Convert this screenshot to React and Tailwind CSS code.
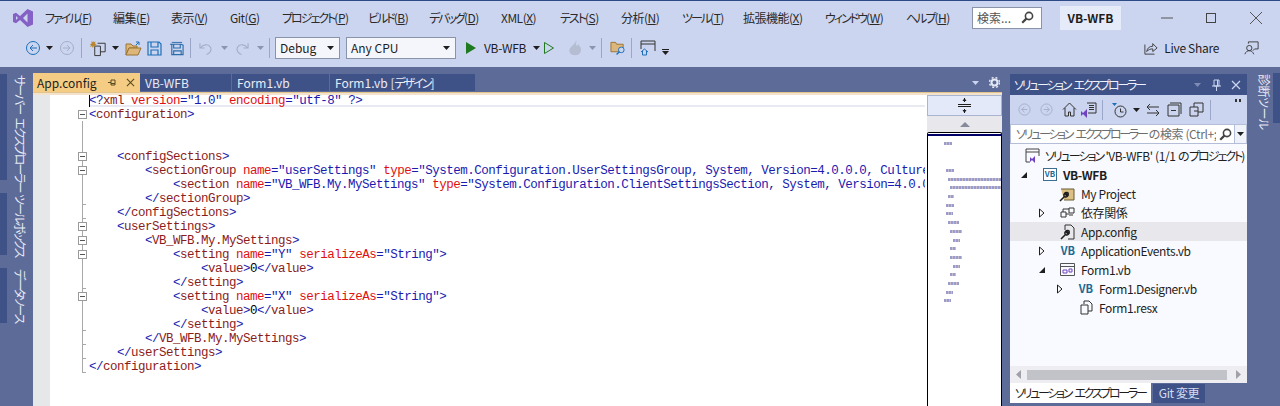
const menus = [
  ['ファイル', 'F', 'w-[68px]', true], ['編集', 'E', 'w-[58px]'], ['表示', 'V', 'w-[59px]'], ['Git', 'G', 'w-[52px]'],
  ['プロジェクト', 'P', 'w-[86px]', true], ['ビルド', 'B', 'w-[61px]', true], ['デバッグ', 'D', 'w-[72px]', true], ['XML', 'X', 'w-[59px]'],
  ['テスト', 'S', 'w-[61px]', true], ['分析', 'N', 'w-[61px]'], ['ツール', 'T', 'w-[61px]', true], ['拡張機能', 'X', 'w-[82px]'],
  ['ウィンドウ', 'W', 'w-[81px]', true], ['ヘルプ', 'H', 'w-[66px]', true],
];

const code = [
  '<?xml version="1.0" encoding="utf-8" ?>',
  '<configuration>',
  '',
  '',
  '    <configSections>',
  '        <sectionGroup name="userSettings" type="System.Configuration.UserSettingsGroup, System, Version=4.0.0.0, Culture=neutral',
  '            <section name="VB_WFB.My.MySettings" type="System.Configuration.ClientSettingsSection, System, Version=4.0.0.0, Culture',
  '        </sectionGroup>',
  '    </configSections>',
  '    <userSettings>',
  '        <VB_WFB.My.MySettings>',
  '            <setting name="Y" serializeAs="String">',
  '                <value>0</value>',
  '            </setting>',
  '            <setting name="X" serializeAs="String">',
  '                <value>0</value>',
  '            </setting>',
  '        </VB_WFB.My.MySettings>',
  '    </userSettings>',
  '</configuration>',
];

// rows with a collapse box, and rows that close a block with a tick
const boxes = [1, 4, 5, 9, 10, 11, 14];
const ticks = [7, 8, 13, 16, 17, 18, 19];

// minimap rows: left offset inside the frame, width, gap above
const mini = [
  [16, 8, 6], [18, 8, 24], [20, 54, 5.7], [22, 52, 5.7], [20, 6, 5.7], [18, 8, 5.7], [18, 7, 5.7], [20, 11, 5.7], [22, 12, 5.7],
  [25, 7, 5.7], [22, 6, 5.7], [22, 12, 5.7], [25, 7, 5.7], [22, 6, 5.7], [20, 11, 5.7], [18, 7, 5.7], [16, 7, 5.7],
];

function tokenize(line) {
  const parts = line.match(/"[^"]*"?|<\/?\??|\??>|=|\s+|[^\s<>="?]+/g) || [];
  let inTag = false;
  let first = false;
  return parts.map((p) => {
    if (p[0] === '<') { inTag = true; first = true; return [p, 'text-[#1a1ab0]']; }
    if (p.endsWith('>')) { inTag = false; return [p, 'text-[#1a1ab0]']; }
    if (p === '=' || p[0] === '"') return [p, 'text-[#1a1ab0]'];
    if (!p.trim()) return [p, ''];
    if (inTag && first) { first = false; return [p, 'text-[#8b1c1c]']; }
    if (inTag) return [p, 'text-[#e01010]'];
    return [p, 'text-black'];
  });
}

// katakana runs are set narrow, like the UI font of the picture
function K({ children }) {
  return <span className="tracking-[-2px]">{children}</span>;
}

function ExplorerName() {
  return <span className="tracking-[-2.3px] [word-spacing:3px]">ソリューション エクスプローラー</span>;
}

function Tri({ open }) {
  return open ? (
    <svg width="8" height="8" viewBox="0 0 8 8"><path d="M1 7h6V1z" fill="#1e1e1e" /></svg>
  ) : (
    <svg width="8" height="10" viewBox="0 0 8 10"><path d="M1.5 1v8l4.5-4z" fill="#fff" stroke="#1e1e1e" /></svg>
  );
}

function Caret({ c = '#1e1e1e' }) {
  return <svg width="7" height="4" viewBox="0 0 7 4"><path d="M0 0h7L3.5 4z" fill={c} /></svg>;
}

function Sep({ className = '' }) {
  return <div className={`w-px h-[20px] bg-[#9aa7c8] ${className}`} />;
}

function SideTab({ label, h, mt }) {
  return (
    <div className={`${h} ${mt} flex`}>
      <div className="w-[7px] bg-[#3f5288]" />
      <div className="w-[26px] flex items-center pt-[1px] text-[#e6eaf5] text-[12px] tracking-[-2px] [word-spacing:4px] [writing-mode:vertical-rl] [text-orientation:sideways] whitespace-nowrap">
        {label}
      </div>
    </div>
  );
}

function Tab({ children, w }) {
  return (
    <div className={`${w} h-[17px] bg-[#3f5288] text-[#e8ecf7] text-[12px] leading-[17px] pl-[5px] whitespace-nowrap overflow-hidden`}>
      {children}
    </div>
  );
}

function VbIcon() {
  return <span className="text-[11px] font-bold text-[#1c6a94] leading-none tracking-normal">VB</span>;
}

function TreeRow({ pad, tri, icon, label, active, bold }) {
  return (
    <div className={`h-[19px] flex items-center whitespace-nowrap ${pad} ${active ? 'bg-[#e8e8ec]' : ''}`}>
      <div className="w-[18px] flex justify-center shrink-0">{tri}</div>
      <div className="w-[30px] h-[16px] flex items-center justify-end pr-[6px] shrink-0">{icon}</div>
      <span className={bold ? 'font-bold' : ''}>{label}</span>
    </div>
  );
}

const wrench = <path d="M1 15l5-5M5 10a2.6 2.6 0 013-3.4L6.4 8.2l1.2 1.2L9.2 7.8A2.6 2.6 0 015.8 10.8" fill="none" stroke="#1e1e1e" strokeWidth="1.5" />;

export default function App() {
  return (
    <div className="w-[1280px] h-[406px] overflow-hidden flex flex-col bg-[#5d6b99] font-['Noto_Sans_CJK_JP','Noto_Sans',sans-serif] [font-feature-settings:'palt'] text-[#1e1e1e]">
      {/* Title + menu */}
      <div className="h-[67px] bg-[#ccd5f0] border-t border-[#2d4a86] shrink-0 flex flex-col">
        <div className="h-[33px] flex items-center">
          <div className="w-[45px] pl-[13px] shrink-0">
            <svg width="20" height="18" viewBox="0 0 20 18">
              <path d="M14.5 0L20 2.5v13L14.5 18 7 11l-4 3.2L0 13V5l3-1.2L7 7zM3 7v4l2-2zm11.5-2.5L10 9l4.5 4.5z" fill="#8661c5" fillRule="evenodd" />
            </svg>
          </div>
          <div className="flex text-[12px] tracking-[-0.5px] text-[#2a2a2a]">
            {menus.map(([name, key, w, kana]) => (
              <div key={name + key} className={`${w} whitespace-nowrap`}>
                {kana ? <K>{name}</K> : name}(<span className="underline">{key}</span>)
              </div>
            ))}
          </div>
          <div className="w-[70px] h-[22px] border border-[#8a94a8] bg-white flex items-center pl-[4px] text-[12px] text-[#555] shrink-0">
            検索...
            <svg className="ml-auto mr-[7px]" width="13" height="13" viewBox="0 0 13 13">
              <circle cx="8" cy="5" r="3.6" fill="none" stroke="#444" strokeWidth="1.6" />
              <path d="M5.4 7.6L1.2 11.8" stroke="#444" strokeWidth="2.2" />
            </svg>
          </div>
          <div className="ml-[18px] w-[61px] h-[24px] bg-[#e6ebfa] text-[12px] font-bold flex items-center justify-center shrink-0">VB-WFB</div>
          <div className="ml-auto flex items-center mr-[17px]">
            <svg width="12" height="14" viewBox="0 0 12 14"><path d="M0 7h12" stroke="#555" /></svg>
            <svg className="ml-[31px]" width="14" height="14" viewBox="0 0 14 14"><rect x="2.5" y="2.5" width="9" height="9" fill="none" stroke="#444" /></svg>
            <svg className="ml-[31px]" width="14" height="14" viewBox="0 0 14 14"><path d="M1 1l12 12M13 1L1 13" stroke="#555" /></svg>
          </div>
        </div>

        {/* Toolbar */}
        <div className="h-[30px] flex items-center pl-[13px] pb-[2px]">
          <div className="w-[5px] h-[17px] mr-[7px] bg-[radial-gradient(#6f7a96_35%,transparent_40%)] bg-[length:2px_2px]" />
          <svg width="16" height="16" viewBox="0 0 16 16"><circle cx="8" cy="8" r="6.5" fill="none" stroke="#1c6fb8" /><path d="M12 8H5M8 5L5 8l3 3" fill="none" stroke="#1c6fb8" /></svg>
          <div className="ml-[5px]"><Caret /></div>
          <svg className="ml-[6px]" width="16" height="16" viewBox="0 0 16 16"><circle cx="8" cy="8" r="6.5" fill="none" stroke="#a3aec7" /><path d="M4 8h7M8 5l3 3-3 3" fill="none" stroke="#a3aec7" /></svg>
          <Sep className="ml-[6px]" />
          <svg className="ml-[8px]" width="18" height="18" viewBox="0 0 19 18"><path d="M5 7h6v10H5zM8 4h8v9h-5" fill="none" stroke="#333" /><path d="M3 1l1 2 2-1-1 2 2 1-2 1 1 2-2-1-1 2-1-2-2 1 1-2-1-1 2-1-1-2 2 1z" fill="#b8862e" /></svg>
          <div className="ml-[4px]"><Caret /></div>
          <svg className="ml-[6px]" width="17" height="15" viewBox="0 0 17 15"><path d="M1 3h5l2 2h4v2H4L1 14z" fill="#dcb67a" stroke="#9a7432" /><path d="M4 7h12l-3 7H1z" fill="#dcb67a" stroke="#9a7432" /><path d="M11 4l3-3m0 0h-3m3 0v3" fill="none" stroke="#1c6fb8" /></svg>
          <svg className="ml-[5px]" width="15" height="15" viewBox="0 0 15 15"><path d="M1 1h11l2 2v11H1zM4 1v5h7V1M4 14V9h7v5" fill="none" stroke="#1c6fb8" strokeWidth="1.2" /></svg>
          <svg className="ml-[7px]" width="15" height="15" viewBox="0 0 16 15"><path d="M1 3h12l2 1v10H3V3zM5 3v4h7V3M5 14v-4h8v4" fill="none" stroke="#2a6ca8" strokeWidth="1.2" /><path d="M3 1h11" stroke="#2a6ca8" /></svg>
          <Sep className="ml-[6px]" />
          <svg className="ml-[8px]" width="14" height="15" viewBox="0 0 15 15"><path d="M1 2v5h5M1.5 7C4 3 10 2 12.5 6.5 14 10 11 13 8 14" fill="none" stroke="#a3aec7" strokeWidth="1.2" /></svg>
          <div className="ml-[8px]"><Caret c="#8c95ad" /></div>
          <svg className="ml-[7px]" width="14" height="15" viewBox="0 0 15 15"><path d="M14 2v5H9M13.5 7C11 3 5 2 2.5 6.5 1 10 4 13 7 14" fill="none" stroke="#a3aec7" strokeWidth="1.2" /></svg>
          <div className="ml-[8px]"><Caret c="#8c95ad" /></div>
          <Sep className="ml-[5px]" />
          <div className="w-[65px] h-[22px] ml-[5px] border border-[#8a94a8] bg-[#f4f6fc] text-[12px] flex items-center pl-[4px]">
            Debug<span className="ml-auto mr-[5px]"><Caret /></span>
          </div>
          <div className="w-[110px] h-[22px] ml-[6px] border border-[#8a94a8] bg-[#f4f6fc] text-[12px] flex items-center pl-[4px]">
            Any CPU<span className="ml-auto mr-[5px]"><Caret /></span>
          </div>
          <svg className="ml-[9px]" width="12" height="14" viewBox="0 0 12 14"><path d="M1 1v12l10-6z" fill="#1f7a1f" /></svg>
          <span className="ml-[7px] w-[46px] text-[12px] tracking-[-0.3px]">VB-WFB</span>
          <div className="ml-[3px]"><Caret /></div>
          <svg className="ml-[3px]" width="12" height="14" viewBox="0 0 12 14"><path d="M1.5 1.5v11L10.5 7z" fill="none" stroke="#1f7a1f" /></svg>
          <svg className="ml-[14px]" width="13" height="16" viewBox="0 0 13 16"><path d="M7 0c1 3-1 4 1 6 1-1 1-2 1-2 3 3 4 6 2 9-2 3-8 3-10 0-2-4 1-6 3-8 2-2 3-3 3-5z" fill="#b4bdd2" /></svg>
          <div className="ml-[7px]"><Caret c="#8c95ad" /></div>
          <Sep className="ml-[5px]" />
          <svg className="ml-[8px]" width="16" height="16" viewBox="0 0 17 16"><path d="M1 2h5l1 2h7v8H1z" fill="#dcb67a" stroke="#9a7432" /><circle cx="12" cy="10" r="3" fill="#ccd5f0" stroke="#1c6fb8" /><path d="M10 12l-3 3" stroke="#1c6fb8" strokeWidth="1.4" /></svg>
          <Sep className="ml-[5px]" />
          <svg className="ml-[8px]" width="16" height="16" viewBox="0 0 16 16"><path d="M1 1h14v10M1 1v8M1 4h14" fill="none" stroke="#333" /><path d="M1 12l3.5-3L8 12M2.5 11v4h4v-4" fill="none" stroke="#1c6fb8" /></svg>
          <div className="ml-[6px] mt-[8px] flex flex-col items-center gap-[1px]"><div className="w-[7px] h-px bg-[#1e1e1e]" /><Caret /></div>
          <div className="ml-auto flex items-center mr-[21px]">
            <svg width="14" height="14" viewBox="0 0 16 16"><path d="M1 4v11h11M3 12c1-4 3-6 7-6V3l5 5-5 4V9c-3 0-5 1-7 3z" fill="none" stroke="#333" /></svg>
            <span className="ml-[6px] mr-[25px] text-[12px] tracking-[-0.3px]">Live Share</span>
            <svg width="15" height="15" viewBox="0 0 17 17"><circle cx="6" cy="8" r="3" fill="none" stroke="#333" /><path d="M1 15c1-3 3-4 5-4s4 1 5 4M5 3V1h11v8h-4l-2 2" fill="none" stroke="#333" /></svg>
          </div>
        </div>
      </div>

      {/* Main area */}
      <div className="flex-1 flex min-h-0">
        {/* Left tool strip */}
        <div className="w-[33px] shrink-0 flex flex-col pt-[7px]">
          <SideTab label="サーバー エクスプローラー" h="h-[106px]" mt="" />
          <SideTab label="ツールボックス" h="h-[62px]" mt="mt-[13px]" />
          <SideTab label="データソース" h="h-[55px]" mt="mt-[13px]" />
        </div>

        {/* Editor column */}
        <div className="w-[969px] shrink-0 flex flex-col pt-[6px]">
          <div className="h-[19px] flex items-end shrink-0">
            <div className="w-[107px] h-[19px] bg-[#f5cc84] flex items-center pl-[4px] text-[12px] whitespace-nowrap">
              App.config
              <svg className="ml-[11px]" width="9" height="9" viewBox="0 0 9 9"><path d="M0 4.5h3M3 2h4v5H3zM3 5.5h4" fill="none" stroke="#5a4a20" /></svg>
              <svg className="ml-[9px]" width="9" height="9" viewBox="0 0 10 10"><path d="M1 1l8 8M9 1L1 9" stroke="#5a4a20" strokeWidth="1.2" /></svg>
            </div>
            <div className="flex gap-px mb-px">
              <Tab w="w-[91px]">VB-WFB</Tab>
              <Tab w="w-[97px]">Form1.vb</Tab>
              <Tab w="w-[145px]">Form1.vb [<K>デザイン</K>]</Tab>
            </div>
            <div className="ml-auto self-center flex items-center gap-[10px] pr-[2px]">
              <Caret c="#ccd5f0" />
              <svg width="11" height="11" viewBox="0 0 11 11"><circle cx="5.5" cy="5.5" r="3" fill="none" stroke="#e6eaf5" strokeWidth="2" /><circle cx="5.5" cy="5.5" r="5" fill="none" stroke="#e6eaf5" strokeWidth="1.4" strokeDasharray="2 2" /></svg>
            </div>
          </div>
          <div className="h-px bg-[#e2c48e] shrink-0" />
          <div className="h-[2px] bg-[#f3e3cc] shrink-0" />

          <div className="flex-1 flex min-h-0 bg-white">
            {/* Margin */}
            <div className="w-[17px] bg-[#e6e7e8] shrink-0" />
            {/* Outline gutter */}
            <div className="w-[39px] shrink-0 flex flex-col -mt-[2px]">
              {code.map((_, i) => (
                <div key={i} className="h-[14px] relative">
                  {i > 1 && <div className="absolute left-[32px] top-0 bottom-0 w-px bg-[#a8a8a8]" />}
                  {boxes.includes(i) && <div className="absolute left-[28px] top-[3px] w-[9px] h-[9px] border border-[#9a9a9a] bg-white flex items-center justify-center"><div className="w-[5px] h-px bg-[#555]" /></div>}
                  {ticks.includes(i) && <div className="absolute left-[32px] bottom-0 w-[4px] h-px bg-[#a8a8a8]" />}
                </div>
              ))}
            </div>
            {/* Code */}
            <div className="w-[836px] shrink-0 overflow-hidden relative font-['Liberation_Mono',monospace] [font-feature-settings:normal] text-[12.5px] tracking-[-0.5px] leading-[14px]">
              <div className="absolute left-0 right-0 top-0 h-[12px] border-b-2 border-[#e9e9f1]" />
              <div className="absolute left-0 top-0 w-px h-[12px] bg-black" />
              <div className="-mt-[1px]">
                {code.map((line, i) => (
                  <div key={i} className="h-[14px] whitespace-pre relative">
                    {tokenize(line).map(([s, cls], j) => (
                      <span key={j} className={cls}>{s}</span>
                    ))}
                  </div>
                ))}
              </div>
            </div>

            {/* Scroll map */}
            <div className="w-[75px] ml-[2px] shrink-0 flex flex-col bg-white">
              <div className="h-[21px] bg-[#e4e9fa] border border-[#a9b4d0] flex items-center justify-center shrink-0">
                <svg width="13" height="15" viewBox="0 0 13 15"><path d="M0 6.5h13M0 8.5h13M6.5 0v4M6.5 15v-4" stroke="#1e1e1e" /><path d="M4.5 3h4l-2-3zM4.5 12h4l-2 3z" fill="#1e1e1e" /></svg>
              </div>
              <div className="h-[16px] bg-[#e8e8ec] flex items-center justify-center shrink-0">
                <svg width="10" height="5" viewBox="0 0 10 5"><path d="M0 5h10L5 0z" fill="#868999" /></svg>
              </div>
              <div className="flex-1 border-x border-t border-black rounded-t-[2px] overflow-hidden">
                <div className="h-[2px] mt-px bg-[#000066]" />
                {mini.map(([x, w, gap], i) => (
                  <div
                    key={i}
                    className="h-[3px] bg-[repeating-linear-gradient(90deg,#9a9dcc_0_2px,#c8bcc8_2px_3px)]"
                    style={{ marginLeft: x, width: w, marginTop: gap }}
                  />
                ))}
              </div>
            </div>
          </div>
        </div>

        {/* Solution explorer */}
        <div className="ml-[8px] w-[237px] shrink-0 flex flex-col pt-[7px] text-[12px] tracking-[-0.4px]">
          <div className="h-[21px] bg-[#3f5288] text-[#eef1f9] flex items-center pl-[4px] shrink-0 whitespace-nowrap">
            <ExplorerName />
            <span className="ml-auto mr-[11px]"><Caret c="#7e8db8" /></span>
            <svg className="mr-[10px]" width="9" height="12" viewBox="0 0 9 12"><path d="M2 1h5v6H2zM0 7h9M4.5 7v5M5.5 1v6" fill="none" stroke="#ccd5f0" /></svg>
            <svg className="mr-[6px]" width="10" height="10" viewBox="0 0 10 10"><path d="M1 1l8 8M9 1L1 9" stroke="#ccd5f0" strokeWidth="1.2" /></svg>
          </div>
          <div className="h-[29px] bg-[#ccd5f0] flex items-center pl-[8px] shrink-0 relative">
            <svg width="13" height="13" viewBox="0 0 14 14"><circle cx="7" cy="7" r="6" fill="none" stroke="#a3aec7" /><path d="M10 7H4M7 4L4 7l3 3" fill="none" stroke="#a3aec7" /></svg>
            <svg className="ml-[9px]" width="13" height="13" viewBox="0 0 14 14"><circle cx="7" cy="7" r="6" fill="none" stroke="#a3aec7" /><path d="M4 7h6M7 4l3 3-3 3" fill="none" stroke="#a3aec7" /></svg>
            <svg className="ml-[9px]" width="15" height="15" viewBox="0 0 15 15"><path d="M1 7.5L7.5 1 14 7.5M3 6v8h3.5v-4h2v4H12V6" fill="none" stroke="#333" /></svg>
            <svg className="ml-[3px]" width="17" height="16" viewBox="0 0 17 16"><path d="M7 1h9v10H8M9 3.5h5M9 5.5h5M9 7.5h5" fill="none" stroke="#333" /><path d="M1 9l2 2 4-4v9l-4-4-2 2z" fill="#6f42c1" /></svg>
            <Sep className="ml-[5px] mr-[9px]" />
            <svg width="15" height="16" viewBox="0 0 15 16"><circle cx="8.5" cy="9.5" r="5.5" fill="none" stroke="#333" /><path d="M8.5 6.5v3.5h3" fill="none" stroke="#333" /><path d="M0 1h5L2.5 4z" fill="#1c6fb8" /></svg>
            <div className="ml-[6px]"><Caret /></div>
            <svg className="ml-[6px]" width="14" height="12" viewBox="0 0 14 12"><path d="M1 3h12M4 0L1 3l3 3M13 9H1M10 6l3 3-3 3" fill="none" stroke="#333" /></svg>
            <svg className="ml-[7px]" width="15" height="15" viewBox="0 0 15 15"><path d="M3 1h11v11M1 3h11v11H1zM4 8.5h5" fill="none" stroke="#333" /></svg>
            <svg className="ml-[7px]" width="15" height="15" viewBox="0 0 15 15"><path d="M1 5h8v9H1zM5 5V1h9v9H9M5 9h4" fill="none" stroke="#333" /></svg>
            <Sep className="ml-[6px]" />
            <div className="absolute right-[6px] top-[4px] flex gap-[2px]"><div className="w-[2px] h-[3px] bg-[#333]" /><div className="w-[2px] h-[3px] bg-[#333]" /></div>
          </div>
          <div className="h-[20px] bg-white border border-[#b5bed8] flex items-center pl-[2px] shrink-0 text-[#6d6d6d] whitespace-nowrap">
            <span className="w-[203px] overflow-hidden shrink-0 pl-[3px]"><ExplorerName /> の検索 (Ctrl+;)</span>
            <svg className="ml-[3px] shrink-0" width="13" height="13" viewBox="0 0 13 13"><circle cx="8" cy="5" r="3.6" fill="none" stroke="#444" strokeWidth="1.6" /><path d="M5.4 7.6L1.2 11.8" stroke="#444" strokeWidth="2.2" /></svg>
            <div className="ml-auto w-[12px] h-full border-l border-[#b5bed8] flex items-center justify-center shrink-0 bg-[#f0f2fa]"><Caret /></div>
          </div>

          <div className="h-[222px] bg-[#f9faff] shrink-0 overflow-hidden pt-[2px]">
            <div className="h-[19px] flex items-center pl-[15px] whitespace-nowrap">
              <svg className="mr-[5px] shrink-0" width="15" height="15" viewBox="0 0 15 15"><path d="M5 14H1V1h13v7M1 4h13" fill="none" stroke="#424242" /><path d="M5 9l2 2 3-3v7l-3-3-2 2z" fill="#6f42c1" /></svg>
              <span><K>ソリューション</K> 'VB-WFB' (1/1 の<K>プロジェクト</K>)</span>
            </div>
            <TreeRow pad="pl-[5px]" tri={<Tri open />} icon={<div className="w-[14px] h-[13px] border border-[#3c6e91] text-[8px] leading-[10px] font-bold text-[#1c6a94] text-center bg-white tracking-normal">VB</div>} label="VB-WFB" bold />
            <TreeRow pad="pl-[23px]" icon={<svg width="16" height="16" viewBox="0 0 16 16"><path d="M2 3h13v11H5" fill="#dcc083" stroke="#6b5a30" />{wrench}</svg>} label="My Project" />
            <TreeRow pad="pl-[23px]" tri={<Tri />} icon={<svg width="15" height="11" viewBox="0 0 15 11"><path d="M1 5h5v5H1zM9 1h5v5H9zM9 8h4M6 7h3M3 5V2h6" fill="none" stroke="#333" /></svg>} label="依存関係" />
            <TreeRow pad="pl-[23px]" active icon={<svg width="15" height="16" viewBox="0 0 15 16"><path d="M5 6V1h6l3 3v11H8" fill="none" stroke="#333" />{wrench}</svg>} label="App.config" />
            <TreeRow pad="pl-[23px]" tri={<Tri />} icon={<VbIcon />} label="ApplicationEvents.vb" />
            <TreeRow pad="pl-[23px]" tri={<Tri open />} icon={<svg width="15" height="13" viewBox="0 0 15 13"><path d="M.5.5h14v12H.5zM.5 3.5h14" fill="none" stroke="#555" /><path d="M3 7h4v3H3zM9 6h3v3H9z" fill="none" stroke="#6f42c1" /></svg>} label="Form1.vb" />
            <TreeRow pad="pl-[41px]" tri={<Tri />} icon={<VbIcon />} label="Form1.Designer.vb" />
            <TreeRow pad="pl-[41px]" icon={<svg width="13" height="15" viewBox="0 0 13 15"><path d="M4 4V1h5l3 3v7H8M1 5h7v9H1z" fill="none" stroke="#333" /></svg>} label="Form1.resx" />
          </div>
          <div className="h-[17px] bg-[#eeeef2] flex items-center shrink-0 pl-[6px]">
            <svg width="5" height="9" viewBox="0 0 5 9"><path d="M5 0v9L0 4.5z" fill="#a0a0a8" /></svg>
            <div className="ml-[6px] w-[200px] h-[10px] bg-[#c2c3c9]" />
            <svg className="ml-[9px]" width="5" height="9" viewBox="0 0 5 9"><path d="M0 0v9l5-4.5z" fill="#a0a0a8" /></svg>
          </div>
          <div className="flex shrink-0 whitespace-nowrap">
            <div className="h-[20px] w-[141px] bg-white pl-[5px] leading-[19px]"><ExplorerName /></div>
            <div className="h-[19px] w-[52px] ml-[2px] mt-px bg-[#3f5288] text-[#d6dcf0] text-center leading-[18px]">Git 変更</div>
          </div>
        </div>

        {/* Right tool strip */}
        <div className="flex-1 flex pl-[7px] pt-[6px]">
          <div className="w-[19px] h-[50px] flex items-center pt-[1px] text-[#e6eaf5] text-[12px] tracking-[-0.5px] [writing-mode:vertical-rl] [text-orientation:sideways] whitespace-nowrap">診断ツール</div>
          <div className="w-[7px] h-[50px] bg-[#3f5288]" />
        </div>
      </div>
    </div>
  );
}
